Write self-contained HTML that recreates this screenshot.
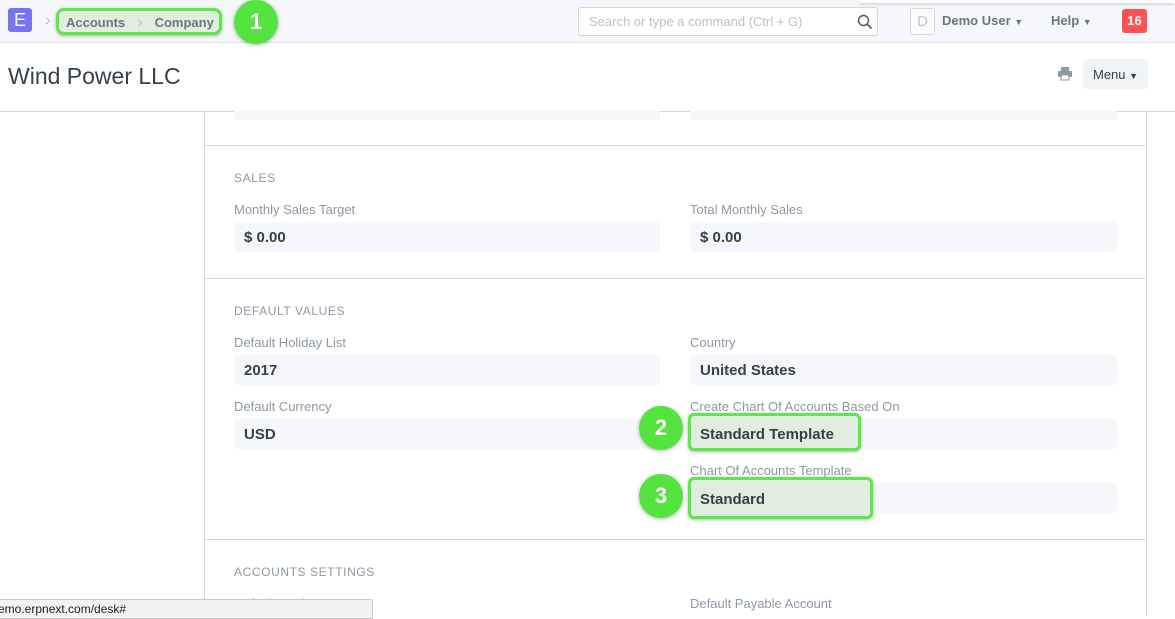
<!DOCTYPE html>
<html><head><style>
*{box-sizing:border-box;margin:0;padding:0}
body{width:1175px;height:616px;overflow:hidden;background:#fff;font-family:"Liberation Sans",sans-serif;position:relative;color:#36414c}
.a{position:absolute;white-space:nowrap}
.nav{left:0;top:0;width:1175px;height:43px;background:#f5f7fa;border-bottom:1px solid #e2e6ea}
.lbl{font-size:13px;color:#8d99a6}
.inp{height:30px;background:#f5f7fa;border-radius:3px;font-weight:bold;font-size:15px;color:#36414c;padding:7px 10px}
.sec{font-size:12px;color:#8d99a6;letter-spacing:.6px}
.hl{border:3px solid #5de84a;background:#dfeedf;border-radius:6px;box-shadow:0 1px 3px rgba(0,0,0,.3)}
.circ{width:44px;height:44px;border-radius:50%;background:#55e33f;color:#fff;font-weight:bold;font-size:22px;text-align:center;line-height:44px;box-shadow:0 1px 4px rgba(0,0,0,.3)}
.hr{height:1px;background:#d1d8dd}
</style></head><body>
<div class="a nav"></div>
<div class="a" style="left:860px;top:0;width:315px;height:3px;background:#fff;box-shadow:0 1px 3px rgba(0,0,0,.2)"></div>
<div class="a" style="left:8px;top:8px;width:24px;height:24px;background:#7575f0;border-radius:3px;color:#fff;font-size:18px;text-align:center;line-height:24px">E</div>
<div class="a" style="left:45px;top:10px;color:#c0c6cc;font-size:17px">&#x203A;</div>
<div class="a hl" style="left:56px;top:8px;width:166px;height:27px;border-radius:8px;font-size:13px;font-weight:bold;color:#6c7680;padding:4px 0 0 7px">Accounts<span style="color:#b8c0c8;font-weight:normal;margin:0 12px;font-size:16px;line-height:13px">&#x203A;</span>Company</div>
<div class="a circ" style="left:234px;top:0px">1</div>
<div class="a" style="left:578px;top:7px;width:300px;height:29px;background:#fff;border:1px solid #d1d8dd;border-radius:3px;font-size:13px;color:#b8c0c8;padding:6px 10px">Search or type a command (Ctrl + G)</div>
<svg class="a" style="left:857px;top:14px" width="16" height="16" viewBox="0 0 16 16"><circle cx="6.5" cy="6.5" r="5" fill="none" stroke="#555" stroke-width="1.4"/><path d="M10 10l4.5 4.5" stroke="#555" stroke-width="1.6"/></svg>
<div class="a" style="left:910px;top:8px;width:25px;height:27px;border:1px solid #d1d8dd;border-radius:3px;background:#fafbfc;color:#c0c6cc;font-size:15px;text-align:center;line-height:25px">D</div>
<div class="a" style="left:942px;top:13px;font-size:13px;font-weight:bold;color:#6c7680">Demo User <span style="font-size:9px">▼</span></div>
<div class="a" style="left:1051px;top:13px;font-size:13px;font-weight:bold;color:#6c7680">Help <span style="font-size:9px">▼</span></div>
<div class="a" style="left:1122px;top:9px;width:25px;height:24px;background:#ff5252;border-radius:3px;color:#fff;font-size:13px;font-weight:bold;text-align:center;line-height:24px">16</div>
<div class="a" style="left:8px;top:63px;font-size:23px;color:#36414c">Wind Power LLC</div>
<svg class="a" style="left:1057px;top:66px" width="16" height="15" viewBox="0 0 16 15"><rect x="4" y="1" width="8" height="4" fill="#8d99a6"/><rect x="1" y="5" width="14" height="6" rx="1" fill="#8d99a6"/><rect x="4" y="9" width="8" height="5" fill="#fff" stroke="#8d99a6"/></svg>
<div class="a" style="left:1083px;top:59px;width:65px;height:30px;background:#f0f4f7;border-radius:3px;font-size:13px;color:#36414c;padding:8px 0 0 10px">Menu <span style="font-size:9px">▼</span></div>
<div class="a hr" style="left:0;top:111px;width:1175px"></div>
<div class="a" style="left:204px;top:111px;width:1px;height:505px;background:#d1d8dd"></div>
<div class="a" style="left:1146px;top:111px;width:1px;height:505px;background:#d1d8dd"></div>
<div class="a" style="left:234px;top:111px;width:426px;height:9px;background:#f5f7fa"></div>
<div class="a" style="left:690px;top:111px;width:427px;height:9px;background:#f5f7fa"></div>
<div class="a hr" style="left:204px;top:145px;width:943px"></div>
<div class="a sec" style="left:234px;top:171px">SALES</div>
<div class="a lbl" style="left:234px;top:202px">Monthly Sales Target</div>
<div class="a inp" style="left:234px;top:222px;width:426px">$ 0.00</div>
<div class="a lbl" style="left:690px;top:202px">Total Monthly Sales</div>
<div class="a inp" style="left:690px;top:222px;width:427px">$ 0.00</div>
<div class="a hr" style="left:204px;top:278px;width:943px"></div>
<div class="a sec" style="left:234px;top:304px">DEFAULT VALUES</div>
<div class="a lbl" style="left:234px;top:335px">Default Holiday List</div>
<div class="a inp" style="left:234px;top:355px;width:426px">2017</div>
<div class="a lbl" style="left:690px;top:335px">Country</div>
<div class="a inp" style="left:690px;top:355px;width:427px">United States</div>
<div class="a lbl" style="left:234px;top:399px">Default Currency</div>
<div class="a inp" style="left:234px;top:419px;width:426px">USD</div>
<div class="a lbl" style="left:690px;top:399px">Create Chart Of Accounts Based On</div>
<div class="a inp" style="left:690px;top:419px;width:427px"></div>
<div class="a hl inp" style="left:688px;top:413px;width:173px;height:38px;padding:10px 9px">Standard Template</div>
<div class="a circ" style="left:639px;top:406px">2</div>
<div class="a lbl" style="left:690px;top:463px">Chart Of Accounts Template</div>
<div class="a inp" style="left:690px;top:483px;width:427px"></div>
<div class="a hl inp" style="left:688px;top:477px;width:185px;height:42px;padding:11px 9px">Standard</div>
<div class="a circ" style="left:639px;top:474px">3</div>
<div class="a hr" style="left:204px;top:539px;width:943px"></div>
<div class="a sec" style="left:234px;top:565px">ACCOUNTS SETTINGS</div>
<div class="a lbl" style="left:234px;top:596px">Default Bank Account</div>
<div class="a lbl" style="left:690px;top:596px">Default Payable Account</div>
<div class="a" style="left:-3px;top:599px;width:376px;height:20px;background:#f2f2f2;border:1px solid #c8c8c8;border-radius:0 3px 0 0;font-size:12px;color:#222;padding:2px 0 0 0">emo.erpnext.com/desk#</div>
</body></html>
